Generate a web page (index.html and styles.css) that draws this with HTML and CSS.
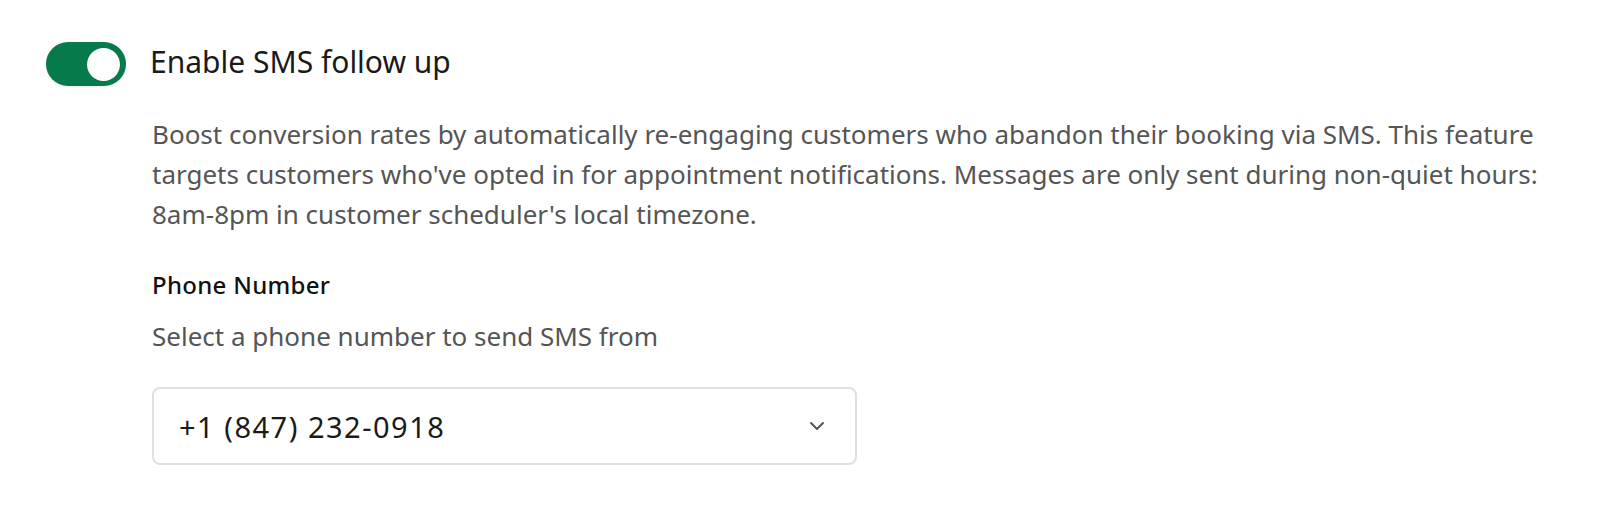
FILE: index.html
```html
<!DOCTYPE html>
<html lang="en">
<head>
  <meta charset="UTF-8">
  <title>SMS follow up</title>
  <link rel="stylesheet" href="styles.css">
</head>
<body>
  <div class="settings">
    <div class="toggle-row">
      <div class="toggle on"><span class="knob"></span></div>
      <span class="toggle-label">Enable SMS follow up</span>
    </div>
    <div class="details">
      <p class="description">Boost conversion rates by automatically re-engaging customers who abandon their booking via SMS. This feature targets customers who've opted in for appointment notifications. Messages are only sent during non-quiet hours: 8am-8pm in customer scheduler's local timezone.</p>
      <div class="field">
        <label class="field-label">Phone Number</label>
        <div class="field-help">Select a phone number to send SMS from</div>
        <div class="select">
          <span class="select-value">+1 (847) 232-0918</span>
          <svg class="chevron" width="16" height="10" viewBox="0 0 16 10">
            <path d="M2 2 L8 8 L14 2" fill="none" stroke="#555" stroke-width="2" stroke-linecap="round" stroke-linejoin="round"/>
          </svg>
        </div>
      </div>
    </div>
  </div>
</body>
</html>
```

FILE: styles.css
```css
body {
  font-family: 'Noto Sans', sans-serif;
  background-color: #ffffff;
  margin: 0;
}

.settings {
  padding: 42px 46px;
}

.toggle-row {
  display: flex;
  align-items: center;
  gap: 24px;
}

.toggle {
  width: 80px;
  height: 44px;
  border-radius: 22px;
  background-color: #077a4b;
  box-sizing: border-box;
  padding: 6px;
  display: flex;
  justify-content: flex-end;
  box-shadow: 0 1px 3px rgba(0, 0, 0, 0.08);
}

.knob {
  width: 33px;
  height: 33px;
  border-radius: 50%;
  background: white;
}

.toggle-label {
  font-size: 30px;
  line-height: 40px;
  padding-bottom: 4px;
  color: #1a1a1a;
}

.details {
  padding-left: 106px;
}

.description {
  font-size: 26px;
  line-height: 40px;
  color: #555;
  margin: 28px 0 0;
  max-width: 1420px;
}

.field {
  margin-top: 36px;
}

.field-label {
  display: block;
  font-size: 24px;
  line-height: 30px;
  font-weight: 500;
  letter-spacing: 0.3px;
  color: #111;
}

.field-help {
  font-size: 26px;
  line-height: 40px;
  color: #555;
  margin-top: 16px;
}

.select {
  width: 705px;
  height: 78px;
  box-sizing: border-box;
  margin-top: 31px;
  border: 2px solid #e0e0e0;
  border-radius: 8px;
  padding: 0 30px 0 25px;
  display: flex;
  align-items: center;
  justify-content: space-between;
}

.select-value {
  font-size: 29px;
  letter-spacing: 1.5px;
  color: #1a1a1a;
}
```
